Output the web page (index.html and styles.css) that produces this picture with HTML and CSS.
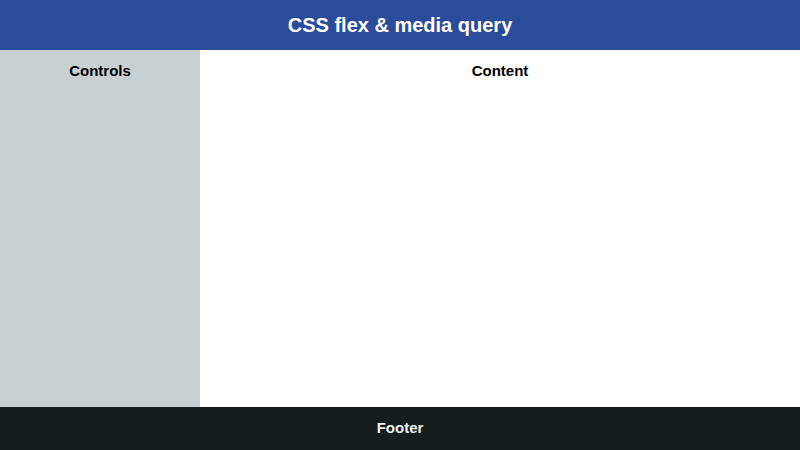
FILE: index.html
```html
<!DOCTYPE html>
<html>
<head>
<meta charset="utf-8">
<link rel="stylesheet" href="styles.css">
</head>
<body>
<div class="page">
  <header class="header"><h1 class="title">CSS flex &amp; media query</h1></header>
  <main class="main">
    <aside class="controls"><h2 class="heading">Controls</h2></aside>
    <section class="content"><h2 class="heading">Content</h2></section>
  </main>
  <footer class="footer"><span class="footer-text">Footer</span></footer>
</div>
</body>
</html>
```
FILE: styles.css
```css
html, body { margin: 0; padding: 0; }
body { font-family: "Liberation Sans", Arial, sans-serif; }
.page { display: flex; flex-direction: column; height: 100vh; }
.header { height: 50px; flex: none; background: #2b4b9b; color: #fff; display: flex; align-items: center; justify-content: center; }
.title { margin: 0; font-size: 20px; font-weight: bold; }
.main { flex: 1; display: flex; }
.controls { width: 200px; background: #c8d0d2; }
.content { flex: 1; background: #fff; }
.heading { margin: 12px 0 0; font-size: 15px; line-height: 18px; font-weight: bold; text-align: center; color: #000; }
.footer { height: 43px; flex: none; box-sizing: border-box; padding-bottom: 2px; background: #171c1d; color: #f0f0f0; display: flex; align-items: center; justify-content: center; }
.footer-text { font-size: 15px; font-weight: bold; }
```
